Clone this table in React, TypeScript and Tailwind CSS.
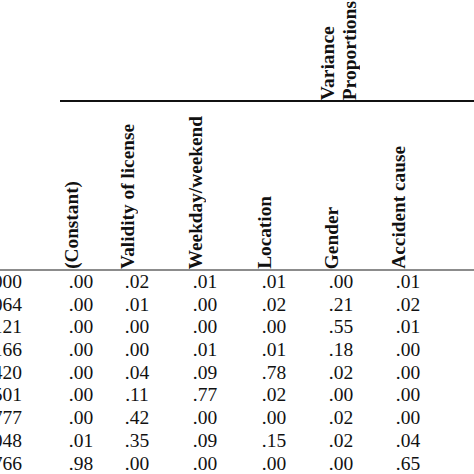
import React from 'react';

const grid = 'grid grid-cols-[53px_56px_56px_80px_58px_76px_58px_1fr]';

const headers = ['(Constant)', 'Validity of license', 'Weekday/weekend', 'Location', 'Gender', 'Accident cause'];

const rows: string[][] = [
  ['1.000', '.00', '.02', '.01', '.01', '.00', '.01'],
  ['2.064', '.00', '.01', '.00', '.02', '.21', '.02'],
  ['2.121', '.00', '.00', '.00', '.00', '.55', '.01'],
  ['2.166', '.00', '.00', '.01', '.01', '.18', '.00'],
  ['2.420', '.00', '.04', '.09', '.78', '.02', '.00'],
  ['2.501', '.00', '.11', '.77', '.02', '.00', '.00'],
  ['2.777', '.00', '.42', '.00', '.00', '.02', '.00'],
  ['3.048', '.01', '.35', '.09', '.15', '.02', '.04'],
  ['3.766', '.98', '.00', '.00', '.00', '.00', '.65'],
];

export default function App() {
  return (
    <div className="w-[474px] h-[474px] overflow-hidden bg-white text-[#111] font-['Liberation_Serif','Times_New_Roman',serif]">
      {/* Group header */}
      <div className={`${grid} h-[100px] items-end`}>
        <div className="col-start-6 pl-[14px]">
          <div className="[writing-mode:vertical-rl] rotate-180 whitespace-nowrap font-bold text-[19.5px] leading-[22px]">
            Variance
            <br />
            Proportions
          </div>
        </div>
      </div>
      <div className="ml-[60px] h-[2px] bg-[#111]" />

      {/* Column headers */}
      <div className={`${grid} h-[167px] items-end`}>
        <div />
        {headers.map((h) => (
          <div
            key={h}
            className="justify-self-center mr-[20px] [writing-mode:vertical-rl] rotate-180 whitespace-nowrap font-bold text-[19.3px] leading-[19px]"
          >
            {h}
          </div>
        ))}
      </div>
      <div className="h-[2px] bg-[#8c8c8c]" />

      {/* Body */}
      <div className="flex flex-col">
        {rows.map((r, i) => (
          <div key={i} className={`${grid} h-[22.7px] leading-[22.7px] text-[19.5px]`}>
            <div className="flex justify-end pr-[31px] whitespace-nowrap">{r[0]}</div>
            {r.slice(1).map((v, j) => (
              <div key={j} className="text-center">
                {v}
              </div>
            ))}
          </div>
        ))}
      </div>
    </div>
  );
}
